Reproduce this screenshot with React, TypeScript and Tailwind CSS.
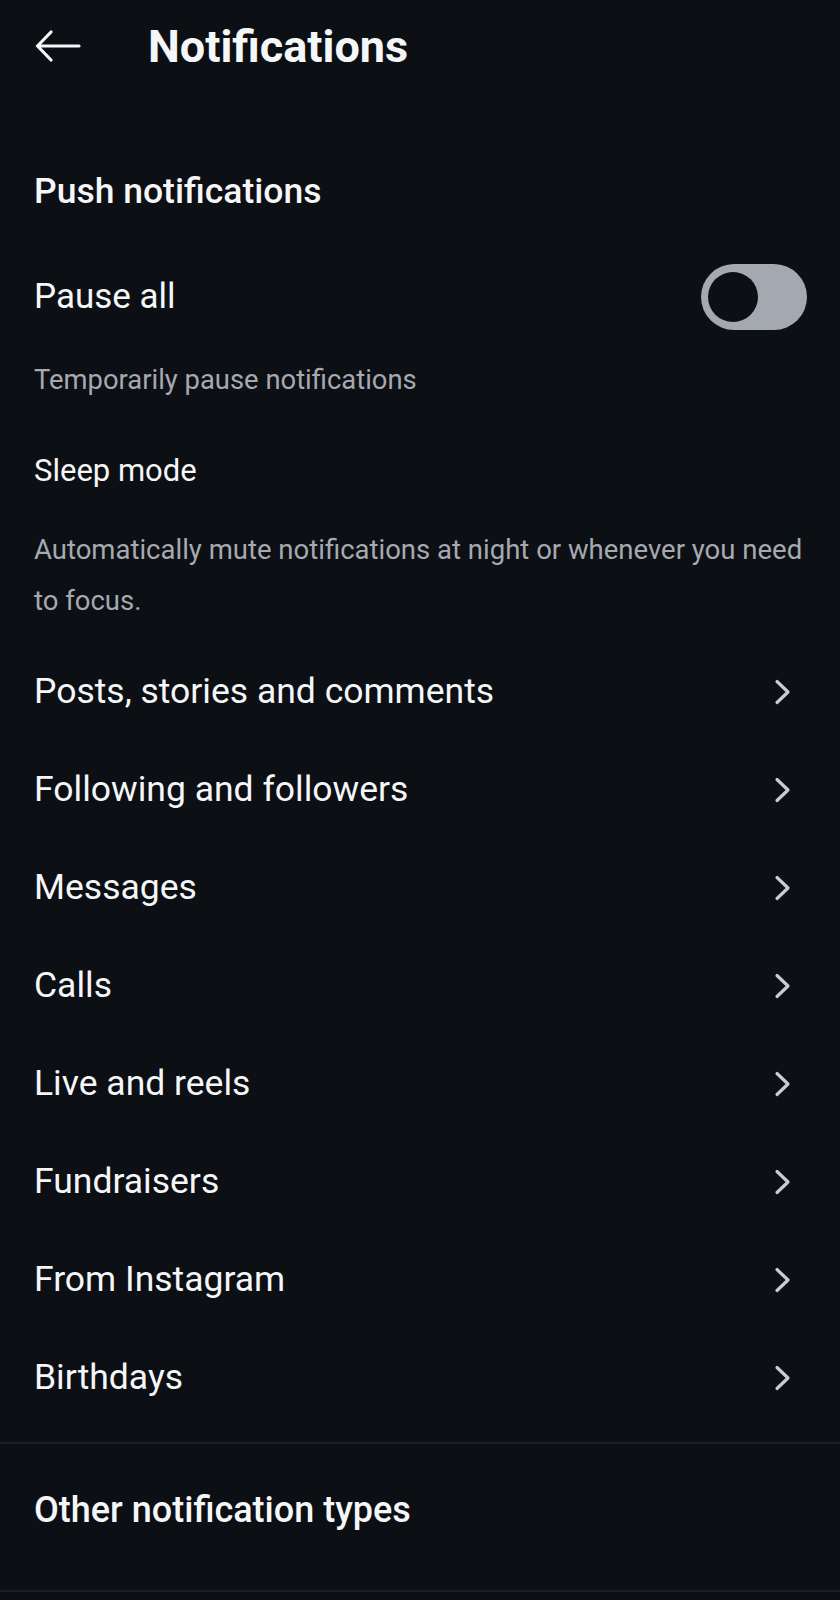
import React from "react";

const rows = [
  "Posts, stories and comments",
  "Following and followers",
  "Messages",
  "Calls",
  "Live and reels",
  "Fundraisers",
  "From Instagram",
  "Birthdays",
];

function Chevron() {
  return (
    <svg width="18" height="26" viewBox="0 0 18 26" fill="none">
      <path d="M3 2.5 L14 13 L3 23.5" stroke="#c9ccd1" strokeWidth="3.2" strokeLinecap="round" strokeLinejoin="round" />
    </svg>
  );
}

export default function App() {
  return (
    <div
      className="w-[840px] min-h-[1600px] bg-[#0c0f14] text-[#f5f6f7] overflow-hidden"
      style={{ fontFamily: "Roboto, 'Noto Sans', sans-serif" }}
    >
      <div className="h-[92px] flex items-center pl-[35px]">
        <svg width="46" height="32" viewBox="0 0 46 32" fill="none">
          <path d="M44 16 H3 M16 2 L2.5 16 L16 30" stroke="#f5f6f7" strokeWidth="3.2" strokeLinecap="round" strokeLinejoin="round" />
        </svg>
        <div className="ml-[67px] text-[45px] font-bold leading-none">Notifications</div>
      </div>

      <div className="mt-[68px] h-[64px] flex items-center px-[34px] text-[35.5px] font-medium">Push notifications</div>

      <div className="mt-[40px] h-[66px] flex items-center justify-between pl-[34px] pr-[33px]">
        <div className="text-[35px]">Pause all</div>
        <div className="w-[106px] h-[66px] rounded-full bg-[#a4a9b1] flex items-center pl-[7px]">
          <div className="w-[50px] h-[50px] rounded-full bg-[#0c0f14]" />
        </div>
      </div>

      <div className="mt-[30px] h-[42px] flex items-center px-[34px] text-[27.4px] text-[#a6a9b0]">Temporarily pause notifications</div>

      <div className="mt-[48px] h-[42px] flex items-center px-[34px] text-[31px]">Sleep mode</div>

      <div className="mt-[32px] pl-[34px] pr-[24px] text-[27.5px] leading-[51px] text-[#a6a9b0]">
        Automatically mute notifications at night or whenever you need to focus.
      </div>

      <div className="mt-[17px]">
        {rows.map((r) => (
          <div key={r} className="h-[98px] flex items-center justify-between pl-[34px] pr-[48px]">
            <div className="text-[35.5px]">{r}</div>
            <Chevron />
          </div>
        ))}
      </div>

      <div className="mt-[15px] h-[2px] bg-[#1c1f24]" />
      <div className="h-[132px] flex items-center px-[34px] text-[36px] font-medium">Other notification types</div>
      <div className="mt-[14px] h-[2px] bg-[#1c1f24]" />
    </div>
  );
}
